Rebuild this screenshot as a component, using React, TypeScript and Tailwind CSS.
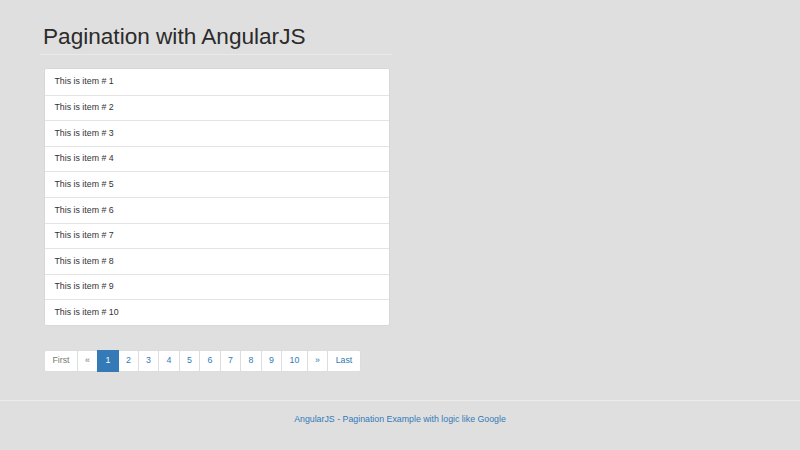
const items = Array.from({ length: 10 }, (_, i) => `This is item # ${i + 1}`);

const pages = [
  { label: 'First', disabled: true, w: 'w-[34px]' },
  { label: '«', disabled: true, w: 'w-[21px]' },
  { label: '1', active: true, w: 'w-[22px]' },
  { label: '2', w: 'w-[21px]' },
  { label: '3', w: 'w-[21px]' },
  { label: '4', w: 'w-[22px]' },
  { label: '5', w: 'w-[21px]' },
  { label: '6', w: 'w-[22px]' },
  { label: '7', w: 'w-[21px]' },
  { label: '8', w: 'w-[22px]' },
  { label: '9', w: 'w-[21px]' },
  { label: '10', w: 'w-[27px]' },
  { label: '»', w: 'w-[21px]' },
  { label: 'Last', w: 'w-[34px]' },
];

export default function App() {
  return (
    <div className="w-[800px] h-[450px] bg-[#dfdfdf] font-['Liberation_Sans',Arial,sans-serif] text-[#333] overflow-hidden flex flex-col">
      <div className="pl-[40px] pt-[25px]">
        {/* page header */}
        <div className="w-[352px] border-b border-[#e9e9e9] pb-[5px]">
          <h1 className="pl-[3px] text-[22.6px] leading-[24px] font-normal text-[#2b2b2b]">
            Pagination with AngularJS
          </h1>
        </div>

        {/* list group */}
        <ul className="ml-[4px] mt-[13px] w-[346px] bg-white rounded-[2px] border border-[#d8d8d8]">
          {items.map((item, i) => (
            <li
              key={item}
              className={`h-[25.6px] flex items-center pl-[9.5px] text-[8.8px] ${i > 0 ? 'border-t border-[#e4e4e4]' : ''}`}
            >
              {item}
            </li>
          ))}
        </ul>

        {/* pagination */}
        <div className="ml-[4px] mt-[24px] flex">
          {pages.map((p, i) => (
            <div
              key={p.label}
              className={`${p.w} shrink-0 h-[22px] flex items-center justify-center text-[8.8px] border -ml-px first:ml-0 ${
                p.active
                  ? 'bg-[#337ab7] border-[#337ab7] text-white relative z-10'
                  : p.disabled
                  ? 'bg-white border-[#dddddd] text-[#777]'
                  : 'bg-white border-[#dddddd] text-[#337ab7]'
              } ${i === 0 ? 'rounded-l-[2px]' : ''} ${i === pages.length - 1 ? 'rounded-r-[2px]' : ''}`}
            >
              {p.label}
            </div>
          ))}
        </div>
      </div>

      {/* footer */}
      <div className="mt-[28px] border-t border-[#ebebeb] pt-[12px] flex justify-center">
        <span className="text-[8.8px] text-[#337ab7]">AngularJS - Pagination Example with logic like Google</span>
      </div>
    </div>
  );
}
